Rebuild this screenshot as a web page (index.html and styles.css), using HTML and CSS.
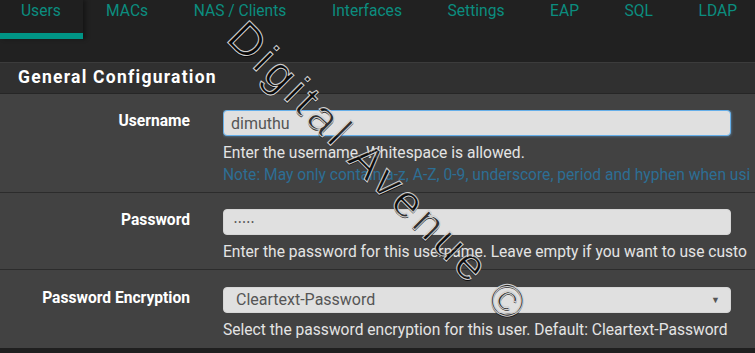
FILE: index.html
```html
<!DOCTYPE html>
<html>
<head>
<meta charset="utf-8">
<link rel="stylesheet" href="styles.css">
</head>
<body>
<nav class="tabs">
  <a class="tab active">Users</a>
  <a class="tab">MACs</a>
  <a class="tab">NAS / Clients</a>
  <a class="tab">Interfaces</a>
  <a class="tab">Settings</a>
  <a class="tab">EAP</a>
  <a class="tab">SQL</a>
  <a class="tab">LDAP</a>
</nav>
<section class="panel">
  <h2 class="panel-title">General Configuration</h2>
  <div class="panel-body">
    <div class="row">
      <label class="label">Username</label>
      <div class="field">
        <input class="input focused" type="text" value="dimuthu">
        <div class="help">Enter the username. Whitespace is allowed.</div>
        <div class="help note">Note: May only contain a-z, A-Z, 0-9, underscore, period and hyphen when usi</div>
      </div>
    </div>
    <div class="row">
      <label class="label">Password</label>
      <div class="field">
        <div class="input dots">•••••</div>
        <div class="help">Enter the password for this username. Leave empty if you want to use custo</div>
      </div>
    </div>
    <div class="row">
      <label class="label">Password Encryption</label>
      <div class="field">
        <div class="input select">Cleartext-Password<span class="arrow">▼</span></div>
        <div class="help">Select the password encryption for this user. Default: Cleartext-Password</div>
      </div>
    </div>
  </div>
</section>
<div class="watermark">Digital Avenue ©</div>
</body>
</html>
```
FILE: styles.css
```css
html, body {
  margin: 0;
  padding: 0;
  background: #1f1f1f;
  font-family: Roboto, "Liberation Sans", sans-serif;
  overflow: hidden;
  width: 755px;
  height: 353px;
  position: relative;
}
.tabs {
  display: flex;
  height: 62px;
  background: #212121;
  white-space: nowrap;
  overflow: hidden;
}
.tab {
  display: block;
  height: 33px;
  padding: 0 22.8px;
  color: #0b8d7f;
  font-size: 15.6px;
  line-height: 22px;
  box-sizing: border-box;
  flex: none;
}
.tab.active {
  border-bottom: 6px solid #009485;
  height: 39px;
  padding-left: 21px;
  padding-right: 22.5px;
  box-shadow: 3px 0 4px rgba(0,0,0,0.35);
  background: #1f1f1f;
}
.panel {
  background: #424242;
  border-top: 1px solid #3c3c3c;
  height: 285px;
}
.panel-title {
  margin: 0;
  height: 31px;
  box-sizing: border-box;
  padding: 3px 0 0 18px;
  background: #303030;
  border-bottom: 1px solid #262626;
  color: #fff;
  font-size: 17.5px;
  font-weight: bold;
  letter-spacing: 1.25px;
  line-height: 22px;
}
.row {
  display: grid;
  grid-template-columns: 190px 1fr;
  column-gap: 33px;
  padding: 16px 0 6px;
  border-bottom: 1px solid #2c2c2c;
  white-space: nowrap;
  overflow: hidden;
}
.row:last-child { border-bottom: none; padding-top: 17px; }
.label {
  text-align: right;
  color: #fff;
  font-weight: bold;
  font-size: 15.6px;
  line-height: 22px;
}
.field { min-width: 0; overflow: hidden; }
.input {
  display: block;
  width: 508px;
  height: 26px;
  box-sizing: border-box;
  margin: 0;
  background: #e0e0e0;
  border: 1px solid #d6d6d6;
  border-radius: 4px;
  padding: 0 7px;
  color: #555;
  font-family: Roboto, "Liberation Sans", sans-serif;
  font-size: 16px;
  line-height: 24px;
  outline: none;
}
.input.focused {
  border-color: #66afe9;
  box-shadow: 0 0 3px rgba(102,175,233,0.7);
}
.dots {
  font-size: 9px;
  letter-spacing: 1.2px;
  padding-left: 10px;
}
.select {
  position: relative;
  padding-left: 12px;
}
.arrow {
  position: absolute;
  right: 10px;
  top: 0;
  font-size: 9px;
  color: #555;
}
.help {
  color: #e4e4e4;
  font-size: 15.6px;
  line-height: 22px;
  margin-top: 6px;
}
.help.note {
  color: #2d6e94;
  margin-top: 0;
}
.watermark {
  position: absolute;
  left: 254px;
  top: 11px;
  transform-origin: 0 0;
  transform: rotate(45deg);
  font-family: "Liberation Sans", sans-serif;
  font-size: 45px;
  letter-spacing: 4.5px;
  color: transparent;
  -webkit-text-stroke: 1px #d0d0d0;
  text-shadow: 1px 1px 0 rgba(0,0,0,0.8);
  white-space: nowrap;
  pointer-events: none;
}
```
